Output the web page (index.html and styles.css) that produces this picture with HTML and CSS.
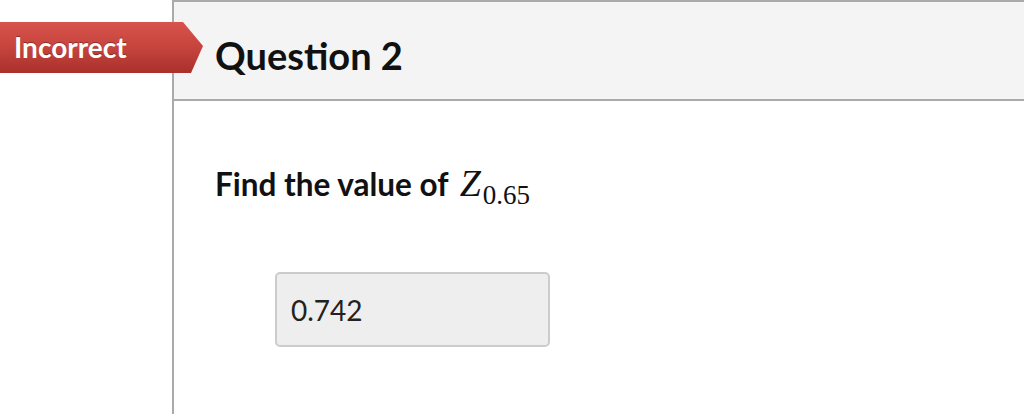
FILE: index.html
```html
<!DOCTYPE html>
<html>
<head>
<meta charset="utf-8">
<link rel="stylesheet" href="styles.css">
</head>
<body>
<div class="page">
  <div class="gutter"></div>
  <div class="panel">
    <div class="panel-header">
      <h2 class="title">Question 2</h2>
    </div>
    <div class="panel-body">
      <p class="prompt">Find the value of <span class="math"><span class="mvar">Z</span><sub class="msub">0.65</sub></span></p>
      <div class="answer">0.742</div>
    </div>
  </div>
  <div class="badge"><span class="badge-text">Incorrect</span></div>
</div>
</body>
</html>
```
FILE: styles.css
```css
html, body {
  margin: 0;
  padding: 0;
  background: #fff;
}
body {
  font-family: Lato, "Open Sans", sans-serif;
  color: #111;
}
.page {
  position: relative;
  display: flex;
  width: 1024px;
  height: 414px;
  overflow: hidden;
}
.gutter {
  width: 172px;
  flex: none;
}
.panel {
  flex: 1;
  border-left: 2px solid #aaaaaa;
  border-top: 2px solid #aaaaaa;
  display: flex;
  flex-direction: column;
}
.panel-header {
  height: 97px;
  background: #f4f4f4;
  border-bottom: 2px solid #aaaaaa;
  display: flex;
  align-items: center;
  padding-left: 41px;
  box-sizing: content-box;
}
.title {
  margin: 0;
  font-size: 38px;
  font-weight: 700;
  color: #111;
  padding-top: 9px;
  letter-spacing: 0;
}
.panel-body {
  padding-left: 41px;
  padding-top: 60px;
  display: flex;
  flex-direction: column;
}
.prompt {
  margin: 0;
  font-size: 31.5px;
  font-weight: 700;
  line-height: 44px;
  color: #111;
}
.math {
  font-weight: 400;
}
.mvar {
  font-style: italic;
  font-size: 38px;
  font-family: "Liberation Serif", serif;
  margin-left: 4px;
}
.msub {
  font-family: "Liberation Serif", serif;
  font-size: 27px;
  vertical-align: -8px;
  line-height: 0;
  margin-left: 2px;
}
.answer {
  margin-top: 66px;
  margin-left: 60px;
  width: 275px;
  height: 75px;
  box-sizing: border-box;
  background: #eeeeee;
  border: 2px solid #cccccc;
  border-radius: 5px;
  padding-left: 14px;
  display: flex;
  align-items: center;
  font-size: 28px;
  color: #222;
}
.badge {
  position: absolute;
  left: 0;
  top: 22px;
  width: 203px;
  height: 51px;
  background: linear-gradient(to bottom, #d6544c 0%, #c6443d 50%, #a9302b 100%);
  clip-path: polygon(0 0, 183px 0, 203px 47%, 191px 100%, 0 100%);
  display: flex;
  align-items: center;
}
.badge-text {
  margin-left: 14px;
  color: #fff;
  font-size: 28px;
  font-weight: 700;
  text-shadow: 0 -1px 0 rgba(0,0,0,0.35);
  padding-bottom: 2px;
}
```
